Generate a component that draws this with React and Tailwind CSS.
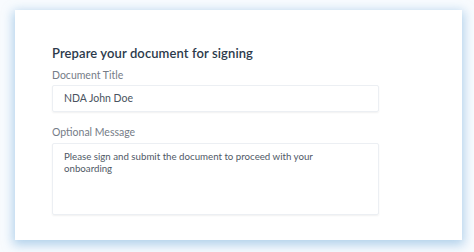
export default function App() {
  return (
    <div
      className="w-[474px] h-[252px] bg-[#f8fbfe] pt-[10px] pl-[15px]"
      style={{ fontFamily: 'Lato, "Noto Sans", sans-serif' }}
    >
      <div className="w-[447px] h-[230px] bg-white shadow-[0_3px_10px_2px_rgba(120,175,220,0.55)] pt-[35px] pl-[37px]">
        <h1 className="text-[13px] font-semibold text-[#2c3a4b] leading-[16px] tracking-[0.1px]">
          Prepare your document for signing
        </h1>
        <label className="block mt-[8px] text-[10.5px] text-[#757c87] leading-[13px]">
          Document Title
        </label>
        <div className="mt-[3px] w-[327px] h-[27px] border border-[#eceff3] rounded-[2px] shadow-[0_1px_2px_rgba(0,0,0,0.06)] flex items-center pl-[11px] text-[10.5px] text-[#4a5360]">
          NDA John Doe
        </div>
        <label className="block mt-[14px] text-[10.5px] text-[#757c87] leading-[13px]">
          Optional Message
        </label>
        <div className="mt-[4px] w-[327px] h-[72px] border border-[#eceff3] rounded-[2px] shadow-[0_1px_2px_rgba(0,0,0,0.06)] pt-[6px] pl-[11px] pr-[50px] text-[9.7px] leading-[12px] text-[#505966]">
          Please sign and submit the document to proceed with your onboarding
        </div>
      </div>
    </div>
  )
}
